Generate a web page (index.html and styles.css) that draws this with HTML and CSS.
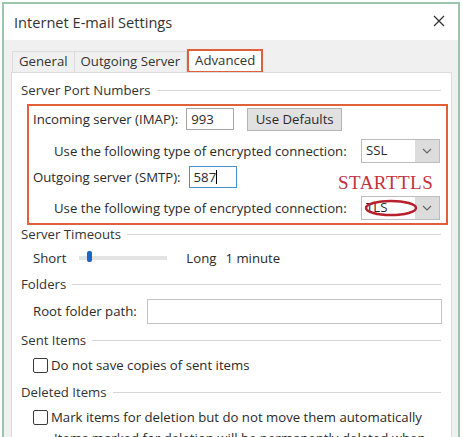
FILE: index.html
```html
<!DOCTYPE html>
<html>
<head>
<meta charset="utf-8">
<link rel="stylesheet" href="styles.css">
</head>
<body>
<div class="window">
  <div class="titlebar">
    <span class="title">Internet E-mail Settings</span>
    <svg class="close" width="12" height="12" viewBox="0 0 12 12"><path d="M1 1 L11 11 M11 1 L1 11" stroke="#333" stroke-width="1.3" fill="none"/></svg>
  </div>
  <div class="client">
    <div class="tabs">
      <div class="tab">General</div>
      <div class="tab">Outgoing Server</div>
      <div class="tab active">Advanced</div>
    </div>
    <div class="panel">
      <div class="legend"><span>Server Port Numbers</span><i></i></div>
      <div class="redbox">
        <div class="row r1">
          <span class="lbl">Incoming server (IMAP):</span>
          <span class="input port">993</span>
          <span class="button">Use Defaults</span>
        </div>
        <div class="row r2 indent">
          <span class="lbl">Use the following type of encrypted connection:</span>
          <span class="select"><span class="val">SSL</span><span class="arrow"><svg width="10" height="6" viewBox="0 0 10 6"><path d="M1 1 L5 5 L9 1" stroke="#666" stroke-width="1.2" fill="none"/></svg></span></span>
        </div>
        <div class="row r3">
          <span class="lbl">Outgoing server (SMTP):</span>
          <span class="input port focus">587<span class="caret"></span></span>
        </div>
        <div class="row r4 indent">
          <span class="lbl">Use the following type of encrypted connection:</span>
          <span class="select"><span class="val">TLS</span><span class="arrow"><svg width="10" height="6" viewBox="0 0 10 6"><path d="M1 1 L5 5 L9 1" stroke="#666" stroke-width="1.2" fill="none"/></svg></span></span>
        </div>
        <span class="note">STARTTLS</span>
        <svg class="ellipse" width="54" height="18" viewBox="0 0 54 18"><ellipse cx="27" cy="9" rx="25" ry="7" stroke="#b8202e" stroke-width="2.5" fill="none"/></svg>
      </div>
      <div class="legend lg2"><span>Server Timeouts</span><i></i></div>
      <div class="row sl">
        <span class="lbl">Short</span>
        <span class="slider"><span class="thumb"></span></span>
        <span class="lbl">Long</span>
        <span class="lbl min">1 minute</span>
      </div>
      <div class="legend lg3"><span>Folders</span><i></i></div>
      <div class="row rf">
        <span class="lbl">Root folder path:</span>
        <span class="input wide"></span>
      </div>
      <div class="legend lg4"><span>Sent Items</span><i></i></div>
      <div class="row cb">
        <span class="box"></span><span class="lbl">Do not save copies of sent items</span>
      </div>
      <div class="legend lg4"><span>Deleted Items</span><i></i></div>
      <div class="row cb">
        <span class="box"></span><span class="lbl">Mark items for deletion but do not move them automatically</span>
      </div>
      <div class="row sub">
        <span class="lbl">Items marked for deletion will be permanently deleted when</span>
      </div>
    </div>
  </div>
</div>
</body>
</html>
```
FILE: styles.css
```css
html, body {
  margin: 0;
  padding: 0;
  background: #ffffff;
  height: 437px;
  overflow: hidden;
}
body {
  font-family: "Open Sans", "Noto Sans", sans-serif;
  font-size: 13.2px;
  color: #2a2a2a;
}
.window {
  position: relative;
  margin: 2px 3px 0 2px;
  height: 460px;
  border: 2px solid #9cc6ab;
  border-bottom: none;
  background: #f0f0f0;
  overflow: hidden;
}
.titlebar {
  height: 36px;
  background: #ffffff;
  display: flex;
  align-items: center;
  justify-content: space-between;
  padding: 0 13px 0 10px;
}
.title {
  font-size: 14.6px;
  color: #333;
  margin-top: -1px;
}
.close {
  margin-top: -2px;
}
.client {
  padding: 0 6px 0 7px;
}
.tabs {
  display: flex;
  align-items: flex-end;
  height: 32px;
  padding-left: 1px;
}
.tab {
  height: 20px;
  line-height: 19px;
  padding: 0 6px;
  border: 1px solid #dcdcdc;
  border-bottom: none;
  background: #f0f0f0;
  color: #333;
}
.tab + .tab {
  border-left: none;
}
.tab.active {
  background: #ffffff;
  height: 20px;
  line-height: 19px;
  padding: 0 6px;
  border: 2px solid #e0603c;
  position: relative;
  top: 1px;
}
.panel {
  position: relative;
  background: #ffffff;
  border: 1px solid #dcdcdc;
  height: 400px;
  padding: 8px 0 0 9px;
}
.legend {
  display: flex;
  align-items: center;
  height: 18px;
  margin-right: 10px;
  color: #333;
}
.legend i {
  flex: 1;
  height: 1px;
  background: #d6d6d6;
  margin-left: 6px;
  margin-top: 1px;
}
.redbox {
  position: relative;
  margin: 5px 3px 0 6px;
  border: 2px solid #e0603c;
  height: 117px;
}
.row {
  display: flex;
  align-items: center;
}
.r1 { height: 26px; padding-left: 4px; }
.r2 { height: 25px; margin-top: 6px; }
.r3 { height: 28px; padding-left: 4px; }
.r4 { height: 27px; margin-top: 3px; }
.indent { padding-left: 25px; }
.input {
  display: inline-block;
  box-sizing: border-box;
  height: 22px;
  line-height: 20px;
  border: 1px solid #a6a6a6;
  background: #fff;
  padding-left: 4px;
}
.port {
  width: 48px;
  margin-left: 8px;
}
.focus {
  border-color: #4a90d0;
}
.caret {
  display: inline-block;
  width: 1px;
  height: 14px;
  background: #000;
  vertical-align: -2px;
}
.button {
  display: inline-block;
  box-sizing: border-box;
  height: 23px;
  line-height: 21px;
  width: 95px;
  margin-left: 13px;
  text-align: center;
  background: #e1e1e1;
  border: 1px solid #b4b4b4;
}
.select {
  margin-left: auto;
  margin-right: 6px;
  box-sizing: border-box;
  width: 79px;
  height: 24px;
  display: flex;
  border: 1px solid #bdbdbd;
  background: #fff;
}
.select .val {
  flex: 1;
  padding-left: 4px;
  line-height: 21px;
}
.select .arrow {
  width: 24px;
  background: #dcdcdc;
  display: flex;
  align-items: center;
  justify-content: center;
}
.note {
  position: absolute;
  left: 309px;
  top: 66px;
  font-family: "Liberation Serif", serif;
  font-size: 19px;
  color: #c53040;
  letter-spacing: 0.5px;
}
.ellipse {
  position: absolute;
  left: 335px;
  top: 93px;
}
.sl { height: 24px; margin-top: 3px; padding-left: 12px; }
.slider {
  position: relative;
  width: 88px;
  height: 4px;
  background: #e3e3e3;
  margin: 0 19px 0 13px;
}
.thumb {
  position: absolute;
  left: 8px;
  top: -5px;
  width: 5px;
  height: 11px;
  border-radius: 2px;
  background: #1c64c8;
}
.min { margin-left: 9px; }
.lg3 { margin-top: 5px; }
.rf { height: 24px; margin-top: 6px; padding-left: 12px; padding-right: 9px; }
.wide {
  flex: 1;
  height: 25px;
  margin-left: 10px;
  border-color: #c4c4c4;
}
.lg4 { margin-top: 8px; }
.cb { height: 20px; margin-top: 6px; padding-left: 12px; }
.box {
  box-sizing: border-box;
  width: 15px;
  height: 15px;
  border: 1px solid #3a3a3a;
  border-radius: 2px;
  margin-right: 3px;
}
.sub { height: 20px; margin-top: 1px; padding-left: 33px; }
```
